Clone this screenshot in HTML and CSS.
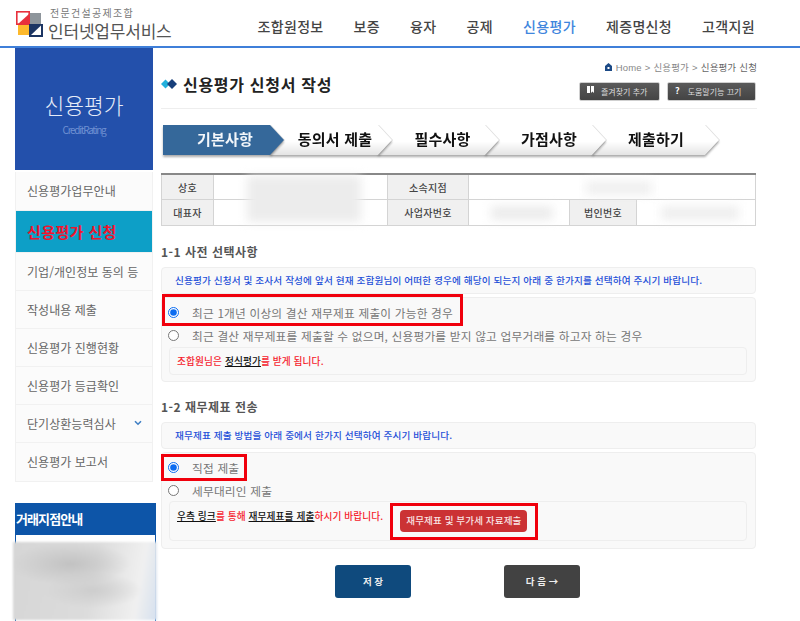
FILE: index.html
```html
<!DOCTYPE html>
<html lang="ko">
<head>
<meta charset="utf-8">
<title>신용평가 신청서 작성</title>
<link rel="stylesheet" href="styles.css">
</head>
<body>
<header class="top">
  <a class="logo">
    <svg class="logo-mark" width="30" height="28" viewBox="0 0 30 28">
      <rect x="13" y="3" width="13" height="12" fill="#8e959b"/>
      <rect x="1.8" y="1.8" width="12.4" height="12.4" fill="#fff" stroke="#e8303c" stroke-width="1.6"/>
      <path d="M3 14 L14 4 V14 Z" fill="#e8303c"/>
      <rect x="3" y="15" width="11" height="10" fill="#fdb92c"/>
      <rect x="14" y="14" width="14" height="13" fill="#1c3563"/>
      <path d="M16 25 L26 15.5 V25 Z" fill="#fff"/>
    </svg>
    <span class="logo-text">
      <span class="logo-sub">전문건설공제조합</span>
      <span class="logo-main">인터넷업무서비스</span>
    </span>
  </a>
  <nav class="gnb">
    <a>조합원정보</a><a>보증</a><a>융자</a><a>공제</a><a class="on">신용평가</a><a>제증명신청</a><a>고객지원</a>
  </nav>
</header>

<div class="wrap">
  <aside class="side">
    <div class="side-head">
      <strong>신용평가</strong>
      <span>CreditRating</span>
    </div>
    <ul class="side-menu">
      <li>신용평가업무안내</li>
      <li class="active">신용평가 신청</li>
      <li>기업/개인정보 동의 등</li>
      <li>작성내용 제출</li>
      <li>신용평가 진행현황</li>
      <li>신용평가 등급확인</li>
      <li class="has-sub">단기상환능력심사
        <svg width="8" height="6" viewBox="0 0 8 6"><path d="M1 1.2 L4 4.2 L7 1.2" fill="none" stroke="#3f7fc4" stroke-width="1.6"/></svg>
      </li>
      <li>신용평가 보고서</li>
    </ul>
    <div class="branch">
      <h3>거래지점안내</h3>
      <div class="branch-body"></div>
      <div class="blur-branch"></div>
    </div>
  </aside>

  <main class="main">
    <div class="title-row">
      <h1 class="page-title">
        <svg width="17" height="10" viewBox="0 0 17 10"><path d="M0 5 L4.5 0.5 L9 5 L4.5 9.5 Z" fill="#22b0dc"/><path d="M6 5 L11 0 L16 5 L11 10 Z" fill="#173f7a"/></svg>
        신용평가 신청서 작성
      </h1>
      <div class="title-tools">
        <div class="crumb">
          <svg width="7" height="8" viewBox="0 0 7 8"><path d="M3.5 0 L7 3 V8 H0 V3 Z" fill="#1c4a86"/><rect x="2.5" y="4" width="2" height="2" fill="#fff"/></svg>
          Home &gt; 신용평가 &gt; <b>신용평가 신청</b>
        </div>
        <div class="tool-btns">
          <a class="tool-btn"><svg width="7" height="8" viewBox="0 0 7 8"><path d="M0 0 H3 V7 H0 Z M4 0 H7 V7 L5.5 5.5 L4 7 Z" fill="#fff"/></svg>즐겨찾기 추가</a>
          <a class="tool-btn help"><b>?</b>도움말기능 끄기</a>
        </div>
      </div>
    </div>

    <ol class="steps">
      <li class="s1 now"><span>기본사항</span></li>
      <li class="s2"><span>동의서 제출</span></li>
      <li class="s3"><span>필수사항</span></li>
      <li class="s4"><span>가점사항</span></li>
      <li class="s5"><span>제출하기</span></li>
    </ol>

    <div class="info-wrap">
      <table class="info">
        <colgroup>
          <col class="c1"><col class="c2"><col class="c3"><col class="c4"><col class="c5"><col class="c6">
        </colgroup>
        <tr>
          <th>상호</th><td></td>
          <th>소속지점</th><td colspan="3"></td>
        </tr>
        <tr>
          <th>대표자</th><td></td>
          <th>사업자번호</th><td></td>
          <th>법인번호</th><td></td>
        </tr>
      </table>
      <i class="smudge b1"></i><i class="smudge b2"></i><i class="smudge b3"></i><i class="smudge b4"></i>
    </div>

    <h2 class="sec first">1-1 사전 선택사항</h2>
    <div class="notice">신용평가 신청서 및 조사서 작성에 앞서 현재 조합원님이 어떠한 경우에 해당이 되는지 아래 중 한가지를 선택하여 주시기 바랍니다.</div>
    <div class="panel p1">
      <label class="opt"><input type="radio" name="a" checked>최근 1개년 이상의 결산 재무제표 제출이 가능한 경우</label>
      <label class="opt"><input type="radio" name="a">최근 결산 재무제표를 제출할 수 없으며, 신용평가를 받지 않고 업무거래를 하고자 하는 경우</label>
      <div class="inner one"><span class="red">조합원님은 <u>정식평가</u>를 받게 됩니다.</span></div>
      <div class="mark m1"></div>
    </div>

    <h2 class="sec second">1-2 재무제표 전송</h2>
    <div class="notice tight">재무제표 제출 방법을 아래 중에서 한가지 선택하여 주시기 바랍니다.</div>
    <div class="panel p2">
      <label class="opt"><input type="radio" name="b" checked>직접 제출</label>
      <label class="opt"><input type="radio" name="b">세무대리인 제출</label>
      <div class="inner two">
        <span class="red"><u>우측 링크</u>를 통해 <u>재무제표를 제출</u>하시기 바랍니다.</span>
        <a class="red-btn">재무제표 및 부가세 자료제출</a>
      </div>
      <div class="mark m2"></div>
      <div class="mark m3"></div>
    </div>

    <div class="actions">
      <a class="act save">저 장</a>
      <a class="act next">다 음 →</a>
    </div>
  </main>
</div>
</body>
</html>
```

FILE: styles.css
```css
* { box-sizing: border-box; }
html, body { margin: 0; padding: 0; height: 621px; overflow: hidden; background: #fff; }
body { font-family: "Noto Sans CJK KR", "Noto Sans", sans-serif; color: #333; }
ul, ol { list-style: none; margin: 0; padding: 0; }
h1, h2, h3, p { margin: 0; }

/* header */
.top { height: 48px; border-bottom: 2px solid #3f7fd9; display: flex; align-items: flex-start; justify-content: space-between; padding: 0 45px 0 15px; }
.logo { display: flex; align-items: flex-start; padding-top: 10px; }
.logo-text { display: flex; flex-direction: column; margin-left: 3px; margin-top: -4px; }
.logo-sub { font-size: 10px; line-height: 14px; color: #777; letter-spacing: 1.3px; padding-left: 2px; }
.logo-main { font-size: 17px; line-height: 21px; color: #555; letter-spacing: -.2px; }
.gnb { display: flex; gap: 30px; padding-top: 16px; }
.gnb a { font-size: 14px; line-height: 20px; font-weight: 500; color: #444; letter-spacing: .35px; }
.gnb a.on { color: #3f86dd; }

/* layout */
.wrap { display: flex; align-items: flex-start; padding-left: 15px; }
.side { width: 138px; flex: none; position: relative; }
.main { width: 596px; flex: none; margin-left: 8px; }

/* sidebar */
.side-head { height: 122px; background: #2350ab; display: flex; flex-direction: column; align-items: center; padding-top: 42px; color: #fff; }
.side-head strong { font-size: 21.5px; line-height: 30px; font-weight: 300; color: #e6ecf8; }
.side-head span { font-size: 10px; line-height: 14px; letter-spacing: -1.3px; color: #6f90d2; margin-top: 3px; }
.side-menu { margin-top: 2px; background: #fbfbfb; border: 1px solid #f1f1f1; border-top: 0; }
.side-menu li { height: 38px; display: flex; align-items: center; justify-content: space-between; padding: 0 10px 1px 11px; font-size: 12px; color: #666; border-bottom: 1px solid #f1f1f1; letter-spacing: .05px; }
.side-menu li:first-child { height: 39px; }
.side-menu li:last-child { border-bottom: 0; }
.side-menu li.active { height: 42px; background: #0d9fc7; color: #f0142d; font-size: 15px; font-weight: 700; letter-spacing: .4px; }
.branch { position: relative; margin-top: 21px; width: 141px; height: 130px; background: linear-gradient(135deg, #0d55a8 72%, #1a62b4 72%); padding: 0 1px; }
.branch h3 { font-size: 13px; line-height: 32px; font-weight: 700; color: #fff; height: 32px; letter-spacing: -.9px; }
.branch-body { background: #fff; height: 98px; }
.blur-branch { position: absolute; left: -2px; top: 39px; width: 144px; height: 78px; background:
  radial-gradient(ellipse 60px 22px at 40% 28%, #c2c2c2, transparent),
  radial-gradient(ellipse 50px 18px at 55% 62%, #cdcdcd, transparent),
  linear-gradient(100deg, #d6d6d6 0%, #dcdcdc 55%, #f0f0f0 85%, #d5e0ef 100%); filter: blur(1px); }

/* title */
.title-row { height: 61px; border-bottom: 1px solid #eee; display: flex; justify-content: space-between; }
.page-title { display: flex; align-items: center; gap: 5px; font-size: 16px; font-weight: 700; line-height: 20px; color: #222; height: 20px; margin-top: 26px; letter-spacing: .7px; }
.title-tools { display: flex; flex-direction: column; align-items: flex-end; padding-top: 13px; }
.crumb { font-size: 9.5px; line-height: 14px; height: 14px; color: #888; font-family: "Liberation Sans", "Noto Sans CJK KR", sans-serif; white-space: nowrap; letter-spacing: .1px; word-spacing: .4px; }
.crumb svg { margin-right: 1px; }
.crumb b { font-weight: 400; color: #666; }
.tool-btns { display: flex; gap: 7px; margin-top: 7px; margin-right: 1px; }
.tool-btn { height: 19px; width: 81px; border-radius: 2px; background: linear-gradient(#5a5a5a, #444); color: #ddd; font-size: 8px; display: flex; align-items: center; gap: 4px; padding-left: 7px; border: 1px solid #d0d0d0; }
.tool-btn svg { margin-bottom: 3px; margin-right: 3px; }
.tool-btn.help { width: 89px; gap: 8px; }
.tool-btn b { color: #fff; font-size: 9px; margin-bottom: 2px; }

/* steps */
.steps { display: flex; margin: 16px 0 0 2px; height: 32px; }
.steps li { position: relative; height: 30px; margin-right: -14px; display: flex; align-items: center; justify-content: center; font-size: 15px; font-weight: 700; color: #111; padding-bottom: 3px; filter: drop-shadow(0 2px 1px rgba(0,0,0,.3)) drop-shadow(1px 0 0 rgba(0,0,0,.12)); }
.steps li::before { content: ""; position: absolute; inset: 0; background: linear-gradient(#fff 55%, #e4e4e4); clip-path: polygon(0 0, calc(100% - 14px) 0, 100% 50%, calc(100% - 14px) 100%, 0 100%); }
.steps li span { position: relative; padding-right: 14px; letter-spacing: .2px; white-space: nowrap; }
.steps li.now { color: #f3f6fa; }
.steps li.now::before { background: #35689a; }
.s1 { width: 121px; z-index: 5; padding-left: 17px; }
.s2 { width: 122px; z-index: 4; padding-left: 22px; }
.s3 { width: 121px; z-index: 3; padding-left: 22px; }
.s4 { width: 121px; z-index: 2; padding-left: 21px; }
.s5 { width: 127px; z-index: 1; padding-left: 15px; }

/* info table */
.info-wrap { position: relative; margin-top: 16px; width: 595px; }
.info { width: 595px; border-collapse: collapse; border-top: 2px solid #888; table-layout: fixed; }
.info th, .info td { height: 26px; border: 1px solid #d4d4d4; padding: 1px 0 0; font-size: 10px; }
.info tr:first-child th, .info tr:first-child td { border-top: 0; height: 25px; }
.info th { background: #f0f0f0; font-weight: 500; color: #444; letter-spacing: .3px; }
.c1 { width: 52px; }
.c2 { width: 174px; }
.c3 { width: 81px; }
.c4 { width: 101px; }
.c5 { width: 67px; }
.smudge { position: absolute; filter: blur(5px); }
.b1 { left: 86px; top: 3px; width: 114px; height: 46px; background: #ececec; }
.b2 { left: 425px; top: 8px; width: 66px; height: 14px; background: #f0f0f0; }
.b3 { left: 330px; top: 33px; width: 62px; height: 14px; background: #ececec; }
.b4 { left: 500px; top: 33px; width: 78px; height: 14px; background: #efefef; }

/* sections */
.sec { font-size: 12px; line-height: 16px; font-weight: 700; color: #555; letter-spacing: .5px; }
.sec.first { margin-top: 18px; }
.sec.second { margin-top: 17px; }
.notice { width: 595px; height: 27px; margin-top: 7px; background: #f9f9f9; border: 1px solid #eee; border-radius: 4px; padding-left: 13px; font-size: 9.65px; line-height: 25px; font-weight: 500; color: #1f50d8; white-space: nowrap; letter-spacing: .13px; }
.notice.tight { margin-top: 7px; }
.panel { position: relative; width: 595px; margin-top: 3px; background: #f9f9f9; border: 1px solid #eee; border-radius: 4px; padding: 3px 8px 0 7px; }
.p1 { height: 85px; }
.p2 { height: 97px; }
.opt { display: flex; align-items: center; height: 23px; font-size: 11.7px; color: #777; letter-spacing: .2px; white-space: nowrap; }
.opt input { width: 11px; height: 11px; margin: 0 13px 0 -1px; accent-color: #0b6cf0; flex: none; }
.inner { width: 578px; background: #f9f9f9; border: 1px solid #eee; border-radius: 4px; padding-left: 7px; font-size: 9.7px; font-weight: 500; letter-spacing: .1px; }
.inner.one { height: 28px; line-height: 26px; }
.inner.two { height: 40px; margin-top: -1px; display: flex; align-items: flex-start; gap: 17px; line-height: 12px; padding-top: 8px; }
.red { color: #f5222d; white-space: nowrap; }
.red u { color: #111; }
.red-btn { height: 22px; width: 127px; background: #cb3234; border-radius: 4px; color: #f9e6e6; font-size: 9.5px; line-height: 21px; text-align: center; letter-spacing: .15px; white-space: nowrap; }
.mark { position: absolute; border: 3px solid #f0000c; }
.m1 { left: 0; top: -4px; width: 301px; height: 32px; }
.m2 { left: -1px; top: 1px; width: 86px; height: 27px; }
.m3 { left: 228px; top: 50px; width: 148px; height: 37px; }

/* bottom buttons */
.actions { display: flex; gap: 93px; margin: 16px 0 0 174px; }
.act { width: 76px; height: 33px; border-radius: 3px; color: #eee; font-size: 9.5px; font-weight: 700; line-height: 33px; text-align: center; }
.save { background: #0f4a7d; }
.next { background: #424242; }
```
